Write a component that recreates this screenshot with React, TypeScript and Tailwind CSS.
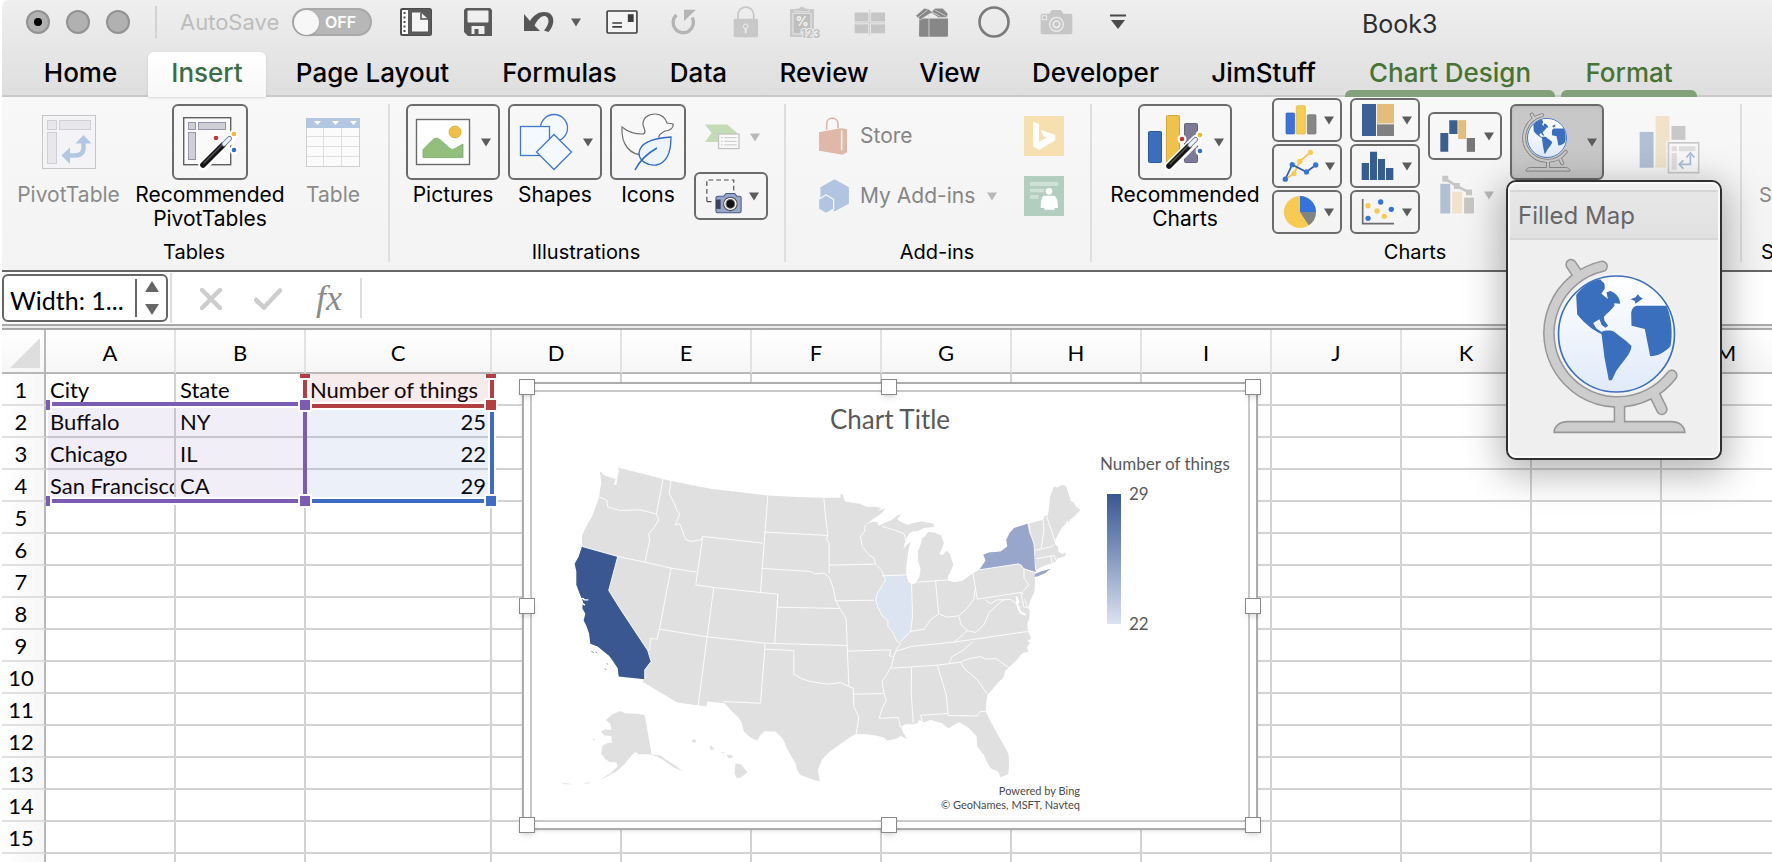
import React from "react";

type Kids = { children?: React.ReactNode };

/* ---------- shared pieces ---------- */

function Caret({ dim = false }: { dim?: boolean }) {
  return (
    <svg width="10" height="9" viewBox="0 0 10 9" className="shrink-0" aria-hidden="true">
      <path d="M0 0.5H10L5 8.5Z" fill={dim ? "#b9b9b9" : "#5c5c5c"} />
    </svg>
  );
}

function Art({ box, w, h, children }: { box: string; w: number; h: number } & Kids) {
  return (
    <svg width={w} height={h} viewBox={box} className="shrink-0" aria-hidden="true">
      {children}
    </svg>
  );
}

function Wand() {
  return (
    <g strokeLinecap="round">
      <path d="M205 168L232 141" stroke="#fff" strokeWidth="10" />
      <circle cx="218" cy="140" r="4.5" fill="#fff" />
      <circle cx="236" cy="136" r="4.5" fill="#fff" />
      <circle cx="236" cy="152" r="4.5" fill="#fff" />
      <path d="M205 167L225 147" stroke="#161616" strokeWidth="5.6" />
      <path d="M206 165L225 146" stroke="#555" strokeWidth="1.2" />
      <path d="M226 146L231.500 140.500" stroke="#6b7896" strokeWidth="5.200" />
      <path d="M226 146L231.500 140.500" stroke="#eef3fc" strokeWidth="3.200" />
      <circle cx="218" cy="140" r="2.3" fill="#c03434" />
      <circle cx="236" cy="136" r="2.3" fill="#f2b92f" />
      <circle cx="236" cy="152" r="2.3" fill="#2f6fd0" />
    </g>
  );
}

function Globe({ w, h, outline = false }: { w: number; h: number; outline?: boolean }) {
  const edge = outline ? "#808080" : "#979797";
  const body = outline ? "#cbcbcb" : "#cdcdcd";
  const arm = (
    <>
      <path d="M368 286A206 206 0 1 0 577 613" />
      <path d="M275 281L296 312" />
      <path d="M528 676L547 715" />
      <path d="M420 700V765" />
    </>
  );
  const base = "M224 784C224 765 241 752 265 752H575C599 752 615 765 616 784Z";
  return (
    <svg width={w} height={h} viewBox="182 258 440 534" aria-hidden="true">
      <defs>
        <linearGradient id={outline ? "seaS" : "seaL"} x1="0" y1="0" x2="0" y2="1">
          <stop offset="0" stopColor="#ffffff" />
          <stop offset="1" stopColor="#e0eafa" />
        </linearGradient>
      </defs>
      <g fill="none" stroke={edge} strokeWidth="35" strokeLinecap="round">{arm}</g>
      <path d={base} fill={body} stroke={edge} strokeWidth={outline ? 8 : 5} />
      <g fill="none" stroke={body} strokeWidth={outline ? 20 : 26} strokeLinecap="round">{arm}</g>
      <circle cx="411" cy="489" r="182" fill={outline ? "#d8d8d8" : "#f3f3f3"} />
      <circle cx="411" cy="489" r="174" fill={outline ? "url(#seaS)" : "url(#seaL)"} stroke="#3a6fbf" strokeWidth={outline ? 8 : 5} />
      <g fill="#3a6fbd">
        <path d="M290 372C310 345 335 330 362 325L375 338 376 352 366 368 385 384 381 364 393 360C410 366 422 382 422 398L404 397 405 404C395 418 380 428 373 438L375 449 386 464 378 470 366 461 360 445 341 456 350 472 366 483C376 478 394 477 405 483L420 495 440 510 456 525C456 545 430 572 410 600L397 628 388 628 375 560 366 489C345 480 318 462 293 430Z" />
        <path d="M472 404H561C577 440 580 490 573 526C556 544 535 556 512 556L496 474 456 464 455 425C457 412 463 405 472 404Z" />
        <path d="M453 385L468 379 475 370 481 377 490 383 478 391 468 398 466 390Z" />
      </g>
    </svg>
  );
}

/* ---------- title bar ---------- */

function QuickButton({ label, wide = false, children }: { label: string; wide?: boolean } & Kids) {
  return (
    <button
      type="button"
      aria-label={label}
      className={
        wide
          ? "flex h-10 w-[82px] shrink-0 items-center justify-center gap-4 pl-1"
          : "flex h-10 w-[62px] shrink-0 items-center justify-center"
      }
    >
      {children}
    </button>
  );
}

function TitleBar() {
  return (
    <header className="flex h-11 items-center">
      <div className="flex w-[155px] shrink-0 gap-4 border-r-2 border-[#d2d2d2] py-1 pl-6">
        <button type="button" aria-label="Close" className="flex size-6 items-center justify-center rounded-full border-2 border-[#929292] bg-[#b1b1b1]">
          <span className="size-2 rounded-full bg-black" />
        </button>
        <button type="button" aria-label="Minimise" className="size-6 rounded-full border-2 border-[#929292] bg-[#b1b1b1]" />
        <button type="button" aria-label="Zoom" className="size-6 rounded-full border-2 border-[#929292] bg-[#b1b1b1]" />
      </div>
      <label className="flex shrink-0 items-center gap-3 pl-[23px] text-[22px] text-[#bdbdbd]">
        <span className="w-[100px]">AutoSave</span>
        <input type="checkbox" role="switch" className="peer sr-only" />
        <span className="flex h-7 w-[80px] items-center rounded-full border-2 border-[#a9a9a9] bg-[#b7b7b7]">
          <span className="size-[25px] rounded-full bg-[#f7f7f7] shadow" />
          <span className="pl-1.5 text-base font-semibold text-white">OFF</span>
        </span>
      </label>
      <div className="flex shrink-0 pl-[13px]">
        <QuickButton label="Workbook gallery">
          <Art box="0 0 32 28" w={32} h={28}>
            <rect x="1" y="1" width="30" height="26" rx="1.5" fill="#fff" stroke="#4c4c4c" strokeWidth="2" />
            <rect x="8" y="1" width="23" height="26" fill="#5b5b5b" />
            <path d="M12 4.500H21L28 11V23.500H12Z" fill="#f4f4f4" />
            <path d="M21 4.500V11H28" fill="none" stroke="#4c4c4c" strokeWidth="1.500" />
            <path d="M4.500 4V24" stroke="#4c4c4c" strokeWidth="2" strokeDasharray="2 2.500" />
          </Art>
        </QuickButton>
        <QuickButton label="Save">
          <Art box="0 0 28 28" w={28} h={28}>
            <path d="M2 0H26L28 2V28H4L0 24V2Z" fill="#5b5b5b" />
            <rect x="3.500" y="2.500" width="21" height="12" rx="1" fill="#efefef" />
            <path d="M7.500 18H20.500V26H7.500Z" fill="#efefef" />
            <rect x="10.500" y="21" width="4" height="5" fill="#5b5b5b" />
          </Art>
        </QuickButton>
        <QuickButton label="Undo" wide>
          <Art box="0 0 32 22" w={32} h={22}>
            <path d="M1 3V20H17L11.500 14.500C16 6 20 4 23 5.500C27 7.500 26 14 21 19.500L25.500 21C32 14 32 4 25 1.500C18 -0.500 11 3 7 10Z" fill="#565656" />
          </Art>
          <Caret />
        </QuickButton>
        <QuickButton label="Mail">
          <Art box="17 29 98 74" w={32} h={24}>
            <rect x="20" y="32" width="92" height="68" rx="3" fill="#f4f4f4" stroke="#3e3e3e" strokeWidth="5" />
            <rect x="84" y="42" width="18" height="24" fill="#3e3e3e" />
            <path d="M36 69H66M36 81H66" stroke="#3e3e3e" strokeWidth="5" />
          </Art>
        </QuickButton>
        <QuickButton label="Repeat">
          <Art box="214 28 78 82" w={26} h={27}>
            <path d="M230 46A31 31 0 1 0 278 54" fill="none" stroke="#b4b4b4" strokeWidth="10" />
            <path d="M253 30H289L253 65Z" fill="#b4b4b4" />
          </Art>
        </QuickButton>
        <QuickButton label="Protect">
          <Art box="399 18 78 96" w={26} h={32}>
            <path d="M414 58V44C414 14 461 14 461 44V58" fill="none" stroke="#c6c6c6" strokeWidth="5" />
            <rect x="401" y="56" width="73" height="56" rx="5" fill="#c8c8c8" />
            <circle cx="437" cy="79" r="7" fill="#c8c8c8" stroke="#efefef" strokeWidth="3" />
            <path d="M437 86V100" stroke="#efefef" strokeWidth="5" />
          </Art>
        </QuickButton>
        <QuickButton label="Paste values">
          <Art box="574 4 114 120" w={38} h={40}>
            <rect x="577" y="25" width="72" height="84" rx="4" fill="#c8c8c8" />
            <rect x="586" y="38" width="54" height="62" fill="#bfbfbf" stroke="#e8e8e8" strokeWidth="3" />
            <path d="M592 33V23H604A10 10 0 0 1 622 23H634V33Z" fill="#c8c8c8" stroke="#ececec" strokeWidth="2" />
            <text x="594" y="76" fontSize="38" fontWeight="700" fill="#f6f6f6" fontFamily="Inter">%</text>
            <text x="610" y="112" fontSize="34" fontWeight="700" fill="#c0c0c0" stroke="#ececec" strokeWidth="6" paintOrder="stroke" fontFamily="Inter">123</text>
          </Art>
        </QuickButton>
        <QuickButton label="Freeze panes">
          <Art box="760 24 98 80" w={32} h={27}>
            <path d="M762 33H804V61H762ZM812 33H855V61H812ZM762 69H804V97H762ZM812 69H855V97H812Z" fill="#c6c6c6" />
            <path d="M808 25V103M762 65H855" stroke="#c6c6c6" strokeWidth="2.500" />
          </Art>
        </QuickButton>
        <QuickButton label="Package">
          <Art box="944 18 102 92" w={34} h={31}>
            <path d="M957 52H1043V102Q1043 107 1037 107H961Q956 107 956 102Z" fill="#878787" />
            <path d="M986 40V107" stroke="#d8d8d8" strokeWidth="2.500" />
            <path d="M946 44L972 21 985 24 994 32 1004 21 1027 21 1043 38 1040 48 1015 50 995 36 988 38 960 56Z" fill="#878787" stroke="#e6e6e6" strokeWidth="2" />
            <path d="M952 50L982 26M1004 27L1036 44M994 32L1020 46" stroke="#e6e6e6" strokeWidth="2" fill="none" />
          </Art>
        </QuickButton>
        <QuickButton label="Oval">
          <Art box="0 0 32 32" w={32} h={32}>
            <circle cx="16" cy="16" r="14.500" fill="none" stroke="#7b7b7b" strokeWidth="2.600" />
          </Art>
        </QuickButton>
        <QuickButton label="Camera">
          <Art box="1318 26 100 78" w={33} h={26}>
            <path d="M1325 40H1346L1354 29H1381L1389 40H1411Q1416 40 1416 45V97Q1416 102 1411 102H1325Q1320 102 1320 97V45Q1320 40 1325 40Z" fill="#c6c6c6" />
            <rect x="1325" y="46" width="13" height="12" fill="#c6c6c6" stroke="#ededed" strokeWidth="3" />
            <circle cx="1368" cy="72" r="21" fill="none" stroke="#ededed" strokeWidth="4" />
            <circle cx="1368" cy="72" r="10" fill="none" stroke="#ededed" strokeWidth="5" />
          </Art>
        </QuickButton>
        <QuickButton label="Customise toolbar">
          <Art box="0 0 16 16" w={16} h={16}>
            <path d="M0 1.500H16" stroke="#4a4a4a" strokeWidth="2" />
            <path d="M1 6H15L8 15Z" fill="#4a4a4a" />
          </Art>
        </QuickButton>
      </div>
      <h1 className="shrink-0 pl-[213px] pt-1.5 text-[25px] font-normal text-[#2e2e2e]">Book3</h1>
    </header>
  );
}

/* ---------- tabs ---------- */

const tabs = [
  { name: "Home", cls: "w-[123px] text-black" },
  { name: "Insert", cls: "w-[118px] rounded-t-md bg-gradient-to-b from-white to-[#f8f8f8] text-[#3b6e47] shadow" },
  { name: "Page Layout", cls: "w-[201px] text-black" },
  { name: "Formulas", cls: "w-[161px] text-black" },
  { name: "Data", cls: "w-[105px] text-black" },
  { name: "Review", cls: "w-[134px] text-black" },
  { name: "View", cls: "w-[106px] text-black" },
  { name: "Developer", cls: "w-[173px] text-black" },
  { name: "JimStuff", cls: "w-[151px] text-black" },
  { name: "Chart Design", cls: "w-[210px] text-[#477334]", bar: true },
  { name: "Format", cls: "w-[136px] text-[#477334]", bar: true },
];

function Tabs() {
  return (
    <nav className="flex h-[53px] gap-1.5 border-b-2 border-[#c9c9c9] pl-[17px] pt-2">
      {tabs.map((t) => (
        <button
          key={t.name}
          type="button"
          className={"relative -mb-0.5 h-[45px] shrink-0 whitespace-nowrap pb-1 text-[26px] font-medium " + t.cls}
        >
          {t.name}
          {t.bar && <span className="absolute inset-x-0 bottom-0 h-[7px] rounded-t-md bg-[#82a079]" />}
        </button>
      ))}
    </nav>
  );
}

/* ---------- ribbon ---------- */

function Group({ label, width, children }: { label: string; width: string } & Kids) {
  return (
    <section aria-label={label} className={"flex shrink-0 flex-col " + width}>
      <div className="flex h-[140px]">{children}</div>
      <div className="h-7 pr-0.5 text-center text-xl leading-[30px] text-black">{label}</div>
    </section>
  );
}

function Rule() {
  return <div className="mt-[7px] h-[158px] w-0.5 shrink-0 bg-[#dedede]" />;
}

function BigButton({
  label,
  item,
  box,
  dim = false,
  children,
}: { label: string; item: string; box: string; dim?: boolean } & Kids) {
  return (
    <button type="button" disabled={dim} className={"flex shrink-0 flex-col items-center gap-[3px] pt-[7px] " + item}>
      <span className={"flex h-[76px] items-center justify-center " + box}>{children}</span>
      <span className={"whitespace-pre-line text-center text-[21px] leading-6 " + (dim ? "text-[#8a8a8a]" : "text-black")}>{label}</span>
    </button>
  );
}

function SmallButton({ label, size, children }: { label: string; size: string } & Kids) {
  return (
    <button
      type="button"
      aria-label={label}
      className={"flex shrink-0 items-center justify-center gap-1.5 rounded-md border-2 border-[#6b6b6b] pl-0.5 " + size}
    >
      {children}
      <Caret />
    </button>
  );
}

const framed = "rounded-md border-2 border-[#6b6b6b]";

function Ribbon() {
  return (
    <div className="flex h-[175px] overflow-hidden border-b-2 border-[#666] bg-gradient-to-b from-[#f8f8f8] to-[#f3f3f3]">
      <Group label="Tables" width="w-[386px]">
        <BigButton label="PivotTable" item="w-[133px]" box="w-[76px]" dim>
          <Art box="42 114 56 56" w={56} h={56}>
            <rect x="43.500" y="115.500" width="53" height="53" fill="#f4f4f6" stroke="#c6c6c9" />
            <g fill="#e8e8ec" stroke="#cfcfd6">
              <rect x="48.500" y="120.500" width="9" height="9" />
              <rect x="60.500" y="120.500" width="31" height="9" />
              <rect x="48.500" y="132.500" width="9" height="31" />
            </g>
            <path d="M70 155.500H75Q84.500 155.500 84.500 148V143" fill="none" stroke="#b3c6e2" strokeWidth="4.500" />
            <path d="M76.500 143.500L84.500 135 92.500 143.500ZM71 147.500L62.500 155.500 71 164Z" fill="#b3c6e2" />
          </Art>
        </BigButton>
        <BigButton label={"Recommended\nPivotTables"} item="w-[150px]" box={"w-[76px] " + framed}>
          <Art box="182 114 60 60" w={60} h={60}>
            <rect x="185.700" y="119.700" width="47" height="47" fill="#fafafa" stroke="#5f5f5f" strokeWidth="1.400" />
            <g fill="#cfcfd6" stroke="#9794ad">
              <rect x="190.500" y="124.500" width="7" height="7" />
              <rect x="200.500" y="124.500" width="27" height="7" />
              <rect x="190.500" y="134.500" width="7" height="27" />
            </g>
            <Wand />
          </Art>
        </BigButton>
        <BigButton label="Table" item="w-[96px]" box="w-[76px]" dim>
          <Art box="306 114 56 56" w={56} h={56}>
            <rect x="307.500" y="118.500" width="53" height="48" fill="#fbfbfb" stroke="#cfcfcf" />
            <rect x="307" y="118" width="54" height="10" fill="#b3c6e2" />
            <path d="M315 121H322L318.500 125ZM333 121H340L336.500 125ZM351 121H358L354.500 125Z" fill="#fff" />
            <path d="M308 136.500H360M308 146.500H360M308 156.500H360M324.500 128V166M342.500 128V166" stroke="#dedede" />
          </Art>
        </BigButton>
      </Group>
      <Rule />
      <Group label="Illustrations" width="w-[394px]">
        <div className="flex gap-2 pl-4">
          <BigButton label="Pictures" item="w-[94px]" box={"w-[94px] gap-2.5 " + framed}>
            <Art box="416 114 56 56" w={56} h={56}>
              <rect x="417.500" y="119.500" width="53" height="45" fill="#fff" stroke="#6a6a6a" strokeWidth="1.400" />
              <circle cx="456" cy="132" r="6" fill="#f0bf45" stroke="#d9a52f" strokeWidth="0.800" />
              <path d="M424 157.500V149.500L434 139.500Q438 136.500 442 140.500L451 148.500Q453 150.500 456 148.500L464 144V157.500Z" fill="#92c07c" stroke="#7aad64" strokeWidth="0.800" />
            </Art>
            <Caret />
          </BigButton>
          <BigButton label="Shapes" item="w-[94px]" box={"w-[94px] gap-2.5 " + framed}>
            <Art box="518 114 56 58" w={56} h={58}>
              <g fill="#f4f8ff" stroke="#3f78cf" strokeWidth="1.300">
                <circle cx="555" cy="129" r="13.500" />
                <rect x="521.500" y="127.500" width="29" height="29" />
                <path d="M555 135.500L572.500 153 555 170.500 537.500 153Z" />
              </g>
            </Art>
            <Caret />
          </BigButton>
          <BigButton label="Icons" item="w-[76px]" box={"w-[76px] " + framed}>
            <Art box="620 112 56 60" w={56} h={60}>
              <path d="M622 127C628 132 636 134 642 134C648 134 643 127 643 124C643 118 648 114 655 114C662 114 666 119 667 123L673 124C674 128 669 131 665 131C661 133 658 135 659 138C663 144 656 155 644 155C630 155 621 145 622 127Z" fill="#fafafa" stroke="#6f6f6f" strokeWidth="1.200" />
              <path d="M671 137C655 138 640 142 639 153C639 161 648 166 656 165C668 163 671 150 671 137Z" fill="#eef4fe" stroke="#2f6bc6" strokeWidth="1.300" />
              <path d="M635 170C640 160 648 153 657 148" fill="none" stroke="#2f6bc6" strokeWidth="1.600" />
            </Art>
          </BigButton>
          <div className="flex flex-col gap-2 pt-3">
            <button type="button" disabled aria-label="SmartArt" className="flex h-[56px] w-[74px] items-center justify-center gap-2 pl-0.5">
              <Art box="45 65 115 90" w={38} h={30}>
                <path d="M48 72H115L145 97 120 125H48L68 98Z" fill="#c3dcb5" />
                <rect x="89" y="101" width="62" height="44" fill="#fafafa" stroke="#c4c4c4" strokeWidth="4" />
                <path d="M106 112H144M106 123H144M106 134H144" stroke="#cfcfcf" strokeWidth="4" />
                <path d="M96 112H102M96 123H102M96 134H102" stroke="#cfcfcf" strokeWidth="4" />
              </Art>
              <Caret dim />
            </button>
            <SmallButton label="Screenshot" size="h-12 w-[74px] -mt-px">
              <Art box="48 238 112 110" w={38} h={37}>
                <path d="M53 308V244H133V276M53 308H76" fill="none" stroke="#4f4f4f" strokeWidth="3.500" strokeDasharray="14 9" />
                <path d="M80 297Q80 292 86 292H104L110 284H136L142 292H150Q155 292 155 297V336Q155 341 150 341H85Q80 341 80 336Z" fill="#96a5cb" stroke="#4e5a80" strokeWidth="3" />
                <rect x="80" y="302" width="14" height="28" fill="#3b435c" />
                <circle cx="123" cy="315" r="20" fill="#fff" stroke="#4b4b4b" strokeWidth="3" />
                <circle cx="123" cy="315" r="13" fill="#131313" stroke="#6a6a6a" strokeWidth="3" />
              </Art>
            </SmallButton>
          </div>
        </div>
      </Group>
      <Rule />
      <Group label="Add-ins" width="w-[304px]">
        <div className="flex pl-8 pt-[19px] text-[21px] text-[#858585]">
          <div className="flex w-[206px] flex-col gap-5">
            <button type="button" disabled className="flex h-10 items-center gap-2">
              <Art box="381 45 102 120" w={34} h={40}>
                <path d="M384 94L448 82 468 84V154L455 161 384 149Z" fill="#dfb8aa" />
                <path d="M407 86V68C407 46 441 46 441 68V82" fill="none" stroke="#dfb8aa" strokeWidth="5" />
                <path d="M452 88V148" stroke="#f6ece8" strokeWidth="5" />
              </Art>
              Store
            </button>
            <button type="button" disabled className="flex h-10 items-center gap-2">
              <Art box="381 232 102 112" w={34} h={37}>
                <path d="M431 236L474 260V310L431 333 388 310V260Z" fill="#b1c4e2" />
                <path d="M405 283L428 297V326L405 340 382 326V297Z" fill="#b1c4e2" stroke="#f4f4f4" strokeWidth="4" />
              </Art>
              <span>My Add-ins</span>
              <span className="pl-1">
                <Caret dim />
              </span>
            </button>
          </div>
          <div className="flex flex-col gap-5">
            <button type="button" disabled aria-label="Bing Maps">
              <Art box="1002 48 120 120" w={40} h={40}>
                <rect x="1002" y="48" width="120" height="120" fill="#f6e0b0" />
                <path d="M1029 65L1047 72V126L1070 113 1060 108 1053 90 1096 105V121L1047 150 1029 139Z" fill="#fff" />
              </Art>
            </button>
            <button type="button" disabled aria-label="People Graph">
              <Art box="1002 228 120 120" w={40} h={40}>
                <rect x="1002" y="228" width="120" height="120" fill="#b3cdbf" />
                <path d="M1020 246H1104V258H1020ZM1020 266H1062V277H1020ZM1020 285H1046V296H1020Z" fill="#cfe0d7" />
                <circle cx="1077" cy="274" r="10" fill="#fff" />
                <path d="M1062 287H1092Q1104 291 1104 324H1094V329H1063V324H1052Q1052 291 1062 287Z" fill="#fff" />
              </Art>
            </button>
          </div>
        </div>
      </Group>
      <Rule />
      <Group label="Charts" width="w-[648px]">
        <div className="flex pl-[13px]">
          <BigButton label={"Recommended\nCharts"} item="w-[160px]" box={"w-[94px] gap-1.5 " + framed}>
            <Art box="1148 112 62 62" w={62} h={62}>
              <rect x="1150.500" y="132.500" width="13" height="31" rx="1" fill="#3b6fbd" stroke="#2c5aa0" />
              <rect x="1168.500" y="116.500" width="13" height="47" rx="1" fill="#efc24b" stroke="#d9a833" />
              <rect x="1186.500" y="124.500" width="13" height="39" rx="1" fill="#7d7a95" stroke="#67647f" />
              <g transform="translate(966 0)">
                <Wand />
              </g>
            </Art>
            <Caret />
          </BigButton>
          <div className="grid h-[138px] grid-cols-2 content-start gap-x-2 gap-y-0.5 pl-[7px] pt-px">
            <SmallButton label="Column chart" size="h-11 w-[70px]">
              <Art box="66 30 108 108" w={36} h={36}>
                <rect x="78" y="63" width="26" height="63" rx="3" fill="#3a74d8" stroke="#2a5fc0" strokeWidth="2" />
                <rect x="109" y="41" width="27" height="85" rx="3" fill="#f8cb52" stroke="#e3b23a" strokeWidth="2" />
                <rect x="142" y="68" width="26" height="58" rx="3" fill="#878787" stroke="#6f6f6f" strokeWidth="2" />
              </Art>
            </SmallButton>
            <SmallButton label="Hierarchy chart" size="h-11 w-[70px]">
              <Art box="300 30 108 108" w={36} h={36}>
                <path d="M306 36H348V132H306Z" fill="#3b6095" />
                <path d="M351 36H402V94H351Z" fill="#e5bd7b" />
                <path d="M351 97H402V132H351Z" fill="#808080" />
              </Art>
            </SmallButton>
            <SmallButton label="Line chart" size="h-11 w-[70px]">
              <Art box="64 168 112 108" w={37} h={36}>
                <path d="M74 262L100 245 118 208 150 181" fill="none" stroke="#f2c14a" strokeWidth="5" />
                <g fill="#f8cb52">
                  <circle cx="100" cy="245" r="8" />
                  <circle cx="118" cy="208" r="8" />
                  <circle cx="150" cy="181" r="8" />
                </g>
                <path d="M74 262L95 218 138 240 166 219" fill="none" stroke="#2d5fae" strokeWidth="5" />
                <g fill="#3573d4">
                  <circle cx="74" cy="262" r="8" />
                  <circle cx="95" cy="218" r="8" />
                  <circle cx="138" cy="240" r="8" />
                  <circle cx="166" cy="219" r="8" />
                </g>
              </Art>
            </SmallButton>
            <SmallButton label="Statistical chart" size="h-11 w-[70px]">
              <Art box="300 168 108 108" w={36} h={36}>
                <path d="M305 213H327V264H305ZM330 179H351V264H330ZM354 201H375V264H354ZM378 228H400V264H378Z" fill="#365d92" />
              </Art>
            </SmallButton>
            <SmallButton label="Pie chart" size="h-11 w-[70px]">
              <Art box="66 306 108 108" w={36} h={36}>
                <circle cx="120" cy="360" r="48" fill="#f7ca52" />
                <path d="M120 360V312A48 48 0 0 1 168 360Z" fill="#3573dc" />
                <path d="M120 360H168A48 48 0 0 1 146 400Z" fill="#838383" />
              </Art>
            </SmallButton>
            <SmallButton label="Scatter chart" size="h-11 w-[70px]">
              <Art box="300 306 108 108" w={36} h={36}>
                <path d="M308 321V395H402" fill="none" stroke="#6c6c6c" strokeWidth="5" />
                <g fill="#f7ca52">
                  <circle cx="324" cy="341" r="8" />
                  <circle cx="351" cy="357" r="8" />
                  <circle cx="373" cy="373" r="8" />
                </g>
                <g fill="#3573d4">
                  <circle cx="362" cy="330" r="8" />
                  <circle cx="394" cy="352" r="8" />
                  <circle cx="324" cy="379" r="8" />
                </g>
              </Art>
            </SmallButton>
          </div>
          <div className="flex flex-col gap-3 pl-2 pt-[15px]">
            <SmallButton label="Waterfall chart" size="h-12 w-[74px]">
              <Art box="536 78 118 108" w={39} h={36}>
                <path d="M540 123H564V180H540ZM567 84H592V126H567Z" fill="#3b5f8f" />
                <path d="M594 84H618V141H594Z" fill="#e5bd7b" />
                <path d="M620 138H645V180H620Z" fill="#777" />
              </Art>
            </SmallButton>
            <button type="button" disabled aria-label="Combo chart" className="flex h-[46px] w-[74px] items-center justify-center gap-2 pl-0.5">
              <Art box="536 250 112 120" w={37} h={40}>
                <path d="M540 276H570V366H540Z" fill="#b1c0d4" />
                <path d="M576 300H606V366H576Z" fill="#f1e3ca" />
                <path d="M612 318H642V366H612Z" fill="#c6c6c6" />
                <path d="M555 261L590 283 627 302" fill="none" stroke="#c6c6c6" strokeWidth="8" />
                <path d="M546 252H564V270H546ZM581 274H599V292H581ZM618 293H636V311H618Z" fill="#c6c6c6" />
              </Art>
              <Caret dim />
            </button>
          </div>
          <div className="pl-2 pt-[7px]">
            <button
              type="button"
              aria-label="Maps"
              aria-expanded="true"
              className="flex h-[76px] w-[94px] items-center justify-center gap-4 rounded-md border-2 border-[#6b6b6b] bg-[#c8c8c8] pl-1 shadow-inner"
            >
              <Globe w={50} h={60} outline />
              <Caret />
            </button>
          </div>
          <button type="button" disabled aria-label="PivotChart" className="ml-[34px] mt-[17px] h-[61px]">
            <Art box="1136 66 188 184" w={63} h={61}>
              <path d="M1140 120H1182V228H1140Z" fill="#b1c0d4" />
              <path d="M1188 72H1230V228H1188Z" fill="#f1e3ca" />
              <path d="M1236 102H1278V144H1236Z" fill="#c8c8c8" />
              <rect x="1220" y="148" width="104" height="100" fill="#f6f6f6" />
              <rect x="1227" y="153" width="91" height="90" fill="#f8f8f8" stroke="#c9c9c9" strokeWidth="5" />
              <path d="M1236 163H1252V178H1236ZM1258 163H1308V178H1258ZM1236 184H1252V234H1236Z" fill="#dedede" />
              <path d="M1262 218H1293V188" fill="none" stroke="#a9bcd8" strokeWidth="5" />
              <path d="M1272 206L1259 218 1272 231M1281 197L1293 183 1305 197" fill="none" stroke="#a9bcd8" strokeWidth="5" />
            </Art>
          </button>
        </div>
      </Group>
      <Rule />
      <section aria-label="Sparklines" className="flex min-w-0 flex-1 flex-col overflow-hidden whitespace-nowrap pl-[17px]">
        <div className="h-[140px] pt-[86px] text-xl leading-6 text-[#8a8a8a]">S</div>
        <div className="h-7 pl-0.5 text-xl leading-[30px] text-black">S</div>
      </section>
    </div>
  );
}

/* ---------- formula bar ---------- */

function FormulaBar() {
  return (
    <div className="flex h-[52px] items-center bg-white">
      <div className="flex h-[50px] w-[170px] shrink-0 items-center border-r-2 border-[#dcdcdc]">
        <div className="flex h-12 w-[166px] items-center rounded-md border-2 border-[#666] bg-white pl-1.5">
          <input
            aria-label="Name box"
            defaultValue="Width: 1..."
            className="w-[125px] shrink-0 bg-transparent pt-1 font-['Lato',sans-serif] text-[25px] leading-8 text-black outline-none"
          />
          <span className="h-[38px] w-0.5 bg-[#666]" />
          <span className="flex flex-col gap-3 pl-2">
            <button type="button" aria-label="Previous name" className="block">
              <svg width="14" height="11" viewBox="0 0 14 11" aria-hidden="true"><path d="M0 11H14L7 0Z" fill="#666" /></svg>
            </button>
            <button type="button" aria-label="Next name" className="block">
              <svg width="14" height="11" viewBox="0 0 14 11" aria-hidden="true"><path d="M0 0H14L7 11Z" fill="#666" /></svg>
            </button>
          </span>
        </div>
      </div>
      <div className="flex h-10 w-[190px] shrink-0 items-center gap-8 border-r-2 border-[#dcdcdc] pl-7 pt-0.5">
        <button type="button" aria-label="Cancel">
          <svg width="22" height="22" viewBox="0 0 22 22" aria-hidden="true"><path d="M2 2L20 20M20 2L2 20" stroke="#cdcdcd" strokeWidth="4.500" strokeLinecap="round" /></svg>
        </button>
        <button type="button" aria-label="Enter">
          <svg width="28" height="22" viewBox="0 0 28 22" aria-hidden="true"><path d="M2 12L10 19.500 26 2.500" fill="none" stroke="#cdcdcd" strokeWidth="4.500" strokeLinecap="round" strokeLinejoin="round" /></svg>
        </button>
        <button type="button" aria-label="Insert function" className="pb-0.5 pl-0.5 font-['Liberation_Serif',serif] text-[36px] italic leading-9 text-[#8c8c8c]">
          fx
        </button>
      </div>
      <input aria-label="Formula" className="h-10 min-w-0 flex-1 bg-transparent px-3 font-['Lato',sans-serif] text-xl outline-none" />
    </div>
  );
}

/* ---------- worksheet ---------- */

const columns = ["A", "B", "C", "D", "E", "F", "G", "H", "I", "J", "K", "L", "M"];
const rows = Array.from({ length: 15 }, (_, i) => i + 1);
const cells: Record<string, string> = {
  A1: "City", B1: "State", C1: "Number of things",
  A2: "Buffalo", B2: "NY", C2: "25",
  A3: "Chicago", B3: "IL", C3: "22",
  A4: "San Francisco", B4: "CA", C4: "29",
};

const rowHead =
  "h-8 border-b-2 border-r-2 border-b-[#e0e0e0] border-r-[#b8b8b8] bg-gradient-to-r from-white to-[#f7f7f7] p-0 pr-1 pt-0.5 font-normal leading-7";
const cell = "h-8 overflow-hidden whitespace-nowrap border-b-2 border-r-2 border-[#d2d2d2] p-0 pl-1 pt-0.5 leading-7 ";

function Grid() {
  return (
    <table className="w-[1790px] table-fixed border-separate border-spacing-0 font-['Lato',sans-serif] text-[22px] text-black">
      <colgroup>
        <col className="w-[44px]" />
        {columns.map((c) => (
          <col key={c} className={c === "C" ? "w-[186px]" : "w-[130px]"} />
        ))}
      </colgroup>
      <thead>
        <tr>
          <th className="h-11 border-b-2 border-r-2 border-[#b8b8b8] bg-gradient-to-b from-white to-[#f6f6f6] p-0">
            <svg width="32" height="32" viewBox="0 0 32 32" className="ml-2 mt-1" aria-hidden="true">
              <path d="M30 1V31H0Z" fill="#dedede" />
            </svg>
          </th>
          {columns.map((c) => (
            <th key={c} scope="col" className="h-11 border-b-2 border-r-2 border-b-[#b8b8b8] border-r-[#e2e2e2] bg-gradient-to-b from-white to-[#f6f6f6] p-0 pt-0.5 font-normal">
              {c}
            </th>
          ))}
        </tr>
      </thead>
      <tbody>
        {rows.map((r) => (
          <tr key={r}>
            <th scope="row" className={rowHead}>
              {r}
            </th>
            {columns.map((c) => (
              <td key={c} className={cell + (c === "C" && r > 1 ? "pr-1 text-right" : "")}>
                {cells[c + r]}
              </td>
            ))}
          </tr>
        ))}
        <tr>
          <th className={rowHead} aria-hidden="true" />
          {columns.map((c) => (
            <td key={c} className={cell} />
          ))}
        </tr>
      </tbody>
    </table>
  );
}

function RangeMarks() {
  const knob = "absolute size-3.5 border-2 border-white ";
  return (
    <div className="pointer-events-none absolute left-[44px] top-[44px] h-[134px] w-[452px] overflow-hidden" aria-hidden="true">
      <div className="absolute left-0.5 top-8 h-24 w-[258px] bg-[#7b5bb3]/10" />
      <div className="absolute left-[260px] top-8 h-24 w-[186px] bg-[#3f6cc4]/10" />
      <div className="absolute left-[260px] top-0 h-8 w-[186px] bg-[#b33f43]/10" />
      <div className="absolute left-[255px] top-0 h-8 w-2 border-x-2 border-white bg-[#b33f43]" />
      <div className="absolute left-[442px] top-0 h-8 w-2 border-x-2 border-white bg-[#b33f43]" />
      <div className="absolute left-[260px] top-7 h-2 w-[186px] border-y-2 border-white bg-[#b33f43]" />
      <div className="absolute left-0 top-7 h-1.5 w-[258px] border-b-2 border-white bg-[#7b5bb3]" />
      <div className="absolute left-0 top-[123px] h-2 w-[258px] border-y-2 border-white bg-[#7b5bb3]" />
      <div className="absolute left-[260px] top-[123px] h-2 w-[186px] border-y-2 border-white bg-[#3f6cc4]" />
      <div className="absolute left-[442px] top-8 h-24 w-2 border-x-2 border-white bg-[#3f6cc4]" />
      <div className="absolute left-[257px] top-8 h-24 w-1 bg-[#7b5bb3]" />
      <div className={knob + "left-[252px] top-[-8px] bg-[#b33f43]"} />
      <div className={knob + "left-[438px] top-[-8px] bg-[#b33f43]"} />
      <div className={knob + "left-[438px] top-6 bg-[#b33f43]"} />
      <div className={knob + "left-[252px] top-6 bg-[#7b5bb3]"} />
      <div className={knob + "left-[252px] top-[120px] bg-[#7b5bb3]"} />
      <div className={knob + "left-[438px] top-[120px] bg-[#3f6cc4]"} />
      <div className={knob + "left-[-8px] top-6 bg-[#7b5bb3]"} />
      <div className={knob + "left-[-8px] top-[120px] bg-[#7b5bb3]"} />
    </div>
  );
}

/* ---------- chart ---------- */

const mainland =
  "M268 304L285 318 305 325 316 328 310 345 318 345 322 318 326 305 322 293 400 313 458 328 482 334 600 357 772 377 860 382 940 384 990 384 990 372 997 374 1003 395 1030 400 1048 402 1070 412 1090 411 1125 416 1112 432 1090 446 1064 466 1085 456 1100 457 1104 468 1130 456 1145 450 1160 437 1172 433 1160 448 1168 455 1190 465 1215 458 1232 455 1260 460 1268 462 1271 472 1240 475 1222 484 1206 485 1195 492 1186 510 1178 537 1192 522 1200 515 1193 545 1187 590 1187 615 1193 636 1203 643 1215 640 1226 622 1230 600 1222 570 1222 545 1232 520 1235 505 1243 500 1252 487 1272 488 1292 497 1300 520 1293 540 1286 552 1295 557 1308 543 1318 553 1328 585 1320 605 1312 620 1312 632 1330 637 1355 633 1387 610 1405 600 1425 572 1418 555 1435 548 1470 545 1490 530 1487 510 1497 490 1510 475 1550 462 1590 452 1598 450 1602 438 1612 437 1616 405 1618 380 1630 350 1640 353 1655 345 1667 350 1680 392 1690 400 1695 408 1710 422 1700 430 1690 440 1678 450 1675 460 1670 452 1663 465 1655 472 1645 490 1635 508 1633 522 1642 532 1643 545 1655 553 1665 548 1664 558 1650 563 1640 565 1635 575 1625 580 1600 588 1578 600 1572 612 1573 640 1572 665 1560 690 1553 712 1545 695 1538 678 1545 700 1557 722 1556 745 1550 762 1552 785 1562 805 1550 815 1560 818 1548 833 1555 845 1535 850 1520 868 1500 888 1484 903 1478 925 1465 935 1440 965 1430 975 1427 1000 1425 1025 1440 1055 1464 1098 1490 1145 1495 1160 1495 1190 1493 1213 1470 1222 1462 1205 1440 1195 1430 1178 1420 1155 1408 1140 1400 1130 1398 1100 1385 1085 1372 1072 1345 1057 1330 1065 1315 1075 1305 1070 1295 1060 1260 1050 1240 1057 1225 1050 1221 1060 1210 1063 1185 1063 1172 1070 1176 1085 1190 1108 1170 1098 1160 1105 1150 1108 1130 1112 1118 1102 1095 1097 1070 1093 1035 1092 1010 1108 960 1143 935 1168 922 1200 928 1235 915 1232 870 1215 860 1200 855 1180 840 1155 828 1132 818 1108 795 1085 762 1084 750 1095 740 1112 720 1103 700 1085 694 1060 684 1043 660 1020 643 1000 590 995 588 1010 500 998 395 935 403 928 325 920 322 895 305 870 296 858 280 845 262 830 240 822 236 790 228 768 220 752 225 732 216 715 218 695 208 672 198 645 198 605 193 582 205 560 215 530 215 497 230 465 245 440 258 405 267 380 268 365 273 340Z";

const california =
  "M215 530L322 560 295 662 330 718 412 842 422 875 403 900 403 928 325 920 322 895 305 870 296 858 280 845 262 830 240 822 236 790 228 768 220 752 225 732 216 715 218 695 208 672 198 645 198 605 193 582 205 560Z";

const illinois =
  "M1115 618L1187 615 1193 638 1203 645 1206 740 1200 785 1185 805 1170 815 1160 815 1155 795 1145 785 1132 770 1132 752 1115 738 1102 712 1096 692 1100 670 1110 655 1125 642 1122 625Z";

const newYork =
  "M1407 600L1425 572 1418 555 1435 548 1470 545 1490 530 1487 510 1497 490 1510 475 1550 462 1556 490 1563 500 1572 535 1575 570 1575 606 1558 602 1540 597 1533 585 1525 582ZM1572 613L1590 605 1620 597 1603 610 1580 620 1572 621Z";

const borders =
  "M268 382L290 392 292 412 330 422 388 420 438 433M458 328L438 433 445 450 430 475 415 492 418 510 404 577M482 334L476 370 490 398 500 422 508 432 495 465 508 462 525 508 540 515 572 510 577 500M215 530L322 560 404 577 482 595 558 607M322 560L295 662 330 718 412 842 422 875 403 900 403 928M577 500L556 645 610 653 750 668M577 500L757 520M772 377L750 668M762 487L952 497M940 384L944 430 952 497 948 510 956 520 956 610M755 596L900 605 912 612 940 610 956 622 968 655 975 690 988 716M750 668L802 673 800 712 988 716 1000 735 1007 750 1010 827M956 586L1095 583M1064 466L1062 485 1050 500 1055 530 1075 555 1090 565 1095 583 1112 600 1125 630 1110 655 1100 670 1096 692 1102 712 1115 738 1132 752 1132 770 1145 785 1160 815 1170 822 1158 838 1150 860 1143 888 1130 912 1115 935 1120 970 1127 992 1115 1015 1106 1045 1163 1043 1170 1072M975 693L1090 691M482 595L447 778M610 653L590 801 563 1008M447 778L590 801 765 820 1010 827M802 673L793 820M447 778L440 808 420 806 418 840 412 842M763 820L763 838 750 1000 640 995M763 838L850 842 850 912 870 925 900 935 930 940 950 943 990 938 1015 950M1010 827L1015 950 1028 955 1030 1010 1045 1042 1037 1092M1010 844L1140 840 1137 858 1148 860M1028 973L1117 971M1115 618L1187 615M1115 470L1150 480 1180 492 1188 515M1203 643L1206 740 1200 785 1170 815M1205 638L1275 633 1315 630M1275 633L1284 732M1200 785L1240 778 1260 750 1284 732 1310 742 1345 738 1370 715 1390 688 1393 660M1155 845L1200 830 1330 817 1550 785M1141 895L1280 886 1350 877 1370 868 1410 860 1425 868 1455 866 1495 893M1315 880L1325 860 1360 840 1387 815M1350 877L1360 895 1400 930 1430 972M1203 893L1202 970 1208 1060M1280 886L1307 975 1313 1037 1400 1038 1408 1025 1425 1025M1313 1031L1230 1036 1235 1055M1345 740L1352 765 1370 782 1345 805 1330 817M1370 782L1395 788 1420 765 1435 730 1460 705 1480 690 1460 690 1440 702 1425 690M1387 610L1400 688 1530 668 1540 672M1407 600L1525 582 1540 597 1572 608M1540 597L1540 625 1555 645 1536 665M1480 690L1500 688 1515 700 1530 715M1530 668L1540 712 1556 712M1554 460L1560 495 1570 520 1575 600M1598 450L1600 480 1592 535M1608 440L1635 520M1572 542L1625 530 1635 520M1575 567L1630 557 1636 572M1620 558L1624 580";

function UsMap() {
  return (
    <svg viewBox="80 280 1640 980" className="absolute left-[5px] top-[71px] h-[327px] w-[547px]" role="img" aria-label="Filled map of the United States">
      <path d={mainland} fill="#e0e0e0" />
      <path d="M1518 693L1522 712 1530 728 1545 735M1517 680L1524 700" fill="none" stroke="#fff" strokeWidth="6" />
      <path d="M1120 410L1100 424 1150 408Z" fill="#fff" />
      <g fill="#e0e0e0">
        <path d="M286 1050L305 1034 330 1023 345 1030 385 1032 403 1036 424 1154 450 1157 475 1175 500 1190 515 1203 490 1193 465 1175 440 1160 415 1153 385 1153 375 1146 362 1158 345 1180 318 1205 290 1220 262 1234 300 1210 322 1190 318 1177 300 1177 285 1168 272 1150 276 1128 290 1120 305 1118 303 1098 282 1097 272 1085 285 1078 303 1080 300 1062Z" />
        <path d="M218 1242L240 1235 236 1240ZM150 1238L190 1243 165 1243ZM245 1104L256 1110 250 1112Z" />
        <path d="M675 1180L692 1184 711 1207 692 1222 680 1226 672 1210ZM648 1156L660 1154 670 1161 655 1165ZM628 1147L645 1147 640 1150ZM597 1130L604 1128 612 1138 602 1140ZM543 1112L553 1107 558 1115 549 1119ZM638 1155L645 1158 640 1159Z" />
      </g>
      <path d={california} fill="#3a5791" />
      <path d="M206 690L218 686 222 690 234 690M215 700L224 706" stroke="#fff" strokeWidth="4" fill="none" />
      <path d="M243 845L250 848M256 847L260 849M289 880L292 884M284 896L287 900" stroke="#3a5791" strokeWidth="2" />
      <path d={illinois} fill="#dce3f1" />
      <path d={newYork} fill="#97a6ca" />
      <path d={borders} fill="none" stroke="#fff" strokeWidth="2.700" strokeLinejoin="round" />
    </svg>
  );
}

function Chart() {
  const handle = "absolute size-4 border border-[#8a8a8a] bg-white shadow-md ";
  return (
    <figure className="absolute left-[520px] top-[52px] h-[448px] w-[736px] border-2 border-[#acacac] bg-white p-1.5 font-['Lato',sans-serif] text-[#595959] shadow-sm">
      <div className="relative h-full border-2 border-[#c9c9c9]">
        <figcaption className="pt-[11px] text-center text-[26px] leading-8">Chart Title</figcaption>
        <UsMap />
        <div className="absolute left-[568px] top-[60px] text-[17px]">
          <div className="leading-6">Number of things</div>
          <div className="mt-4 flex gap-2 pl-[7px]">
            <div className="mt-0.5 h-[130px] w-[14px] bg-gradient-to-b from-[#3a5791] to-[#dce3f1]" />
            <div className="-mt-2 flex h-[150px] flex-col justify-between leading-5">
              <span>29</span>
              <span>22</span>
            </div>
          </div>
        </div>
        <p className="absolute bottom-2 right-[168px] text-right text-[11px] leading-[14px] text-[#4a4a4a]">
          Powered by Bing
          <br />© GeoNames, MSFT, Navteq
        </p>
      </div>
      <span className={handle + "-left-[5px] -top-[5px]"} />
      <span className={handle + "left-[357px] -top-[5px]"} />
      <span className={handle + "-right-[5px] -top-[5px]"} />
      <span className={handle + "-left-[5px] top-[214px]"} />
      <span className={handle + "-right-[5px] top-[214px]"} />
      <span className={handle + "-bottom-[5px] -left-[5px]"} />
      <span className={handle + "-bottom-[5px] left-[357px]"} />
      <span className={handle + "-bottom-[5px] -right-[5px]"} />
    </figure>
  );
}

/* ---------- map gallery ---------- */

function MapMenu() {
  return (
    <div
      role="menu"
      aria-label="Maps"
      className="absolute left-[1504px] top-[180px] w-[216px] overflow-hidden rounded-[10px] border-2 border-[#303030] bg-[#efefef] shadow-[0_10px_36px_6px_rgba(0,0,0,0.28)]"
    >
      <div className="rounded-lg border-2 border-white/70 pt-1.5">
        <h2 className="border-y-2 border-[#d6d6d6] bg-gradient-to-b from-[#e7e7e7] to-[#e1e1e1] pl-2 pt-0.5 text-2xl font-normal leading-[44px] text-[#666]">
          Filled Map
        </h2>
        <button type="button" role="menuitem" aria-label="Filled Map" className="flex h-[216px] w-full justify-center pr-0.5 pt-[17px]">
          <Globe w={147} h={178} />
        </button>
      </div>
    </div>
  );
}

export default function App() {
  return (
    <div className="relative min-h-screen overflow-hidden rounded-tl-lg border-l-2 border-white bg-white font-['Inter',sans-serif]">
      <div className="bg-gradient-to-b from-[#efefef] to-[#dedede]">
        <TitleBar />
        <Tabs />
      </div>
      <Ribbon />
      <FormulaBar />
      <div className="h-1.5 border-y-2 border-[#a9a9a9] bg-[#ececec]" />
      <main className="relative h-[532px] overflow-hidden">
        <Grid />
        <RangeMarks />
        <Chart />
      </main>
      <MapMenu />
    </div>
  );
}
